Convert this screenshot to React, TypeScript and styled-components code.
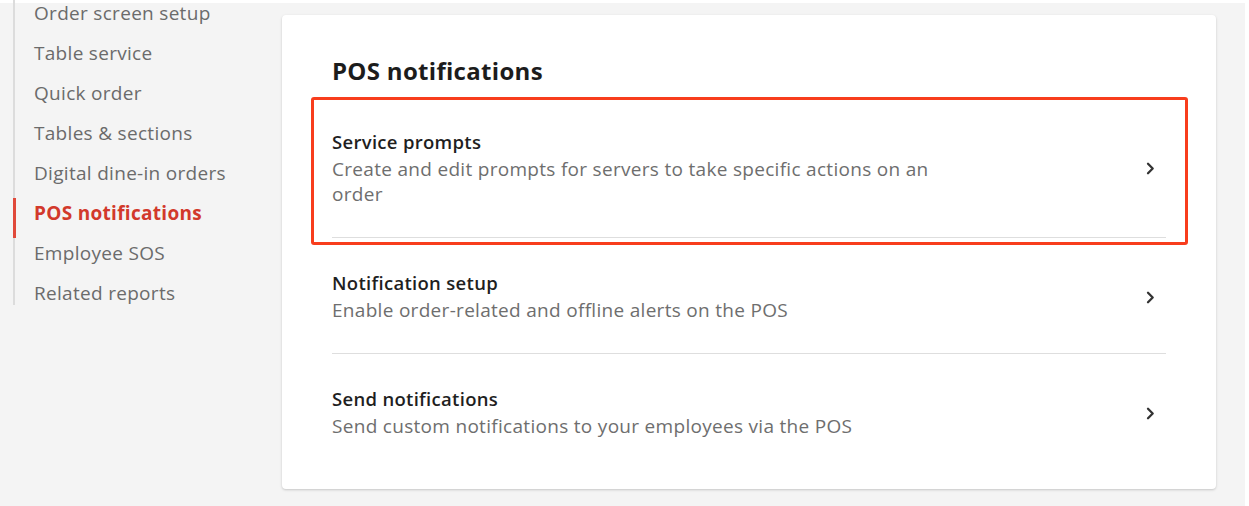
import React from "react";
import styled, { createGlobalStyle } from "styled-components";

const GlobalStyle = createGlobalStyle`
  html, body {
    margin: 0;
    padding: 0;
    background: #ffffff;
  }
  body {
    font-family: "Open Sans", "Liberation Sans", sans-serif;
    -webkit-font-smoothing: antialiased;
  }
`;

const Page = styled.div`
  display: flex;
  align-items: flex-start;
  margin: 3px 4px 0 0;
  height: 503px;
  background: #f4f4f4;
`;

const Sidebar = styled.nav`
  width: 267px;
  flex-shrink: 0;
  margin: -3px 0 0 13px;
  border-left: 2px solid #dcdcdc;
`;

const NavItem = styled.div<{ $active?: boolean }>`
  margin-left: -2px;
  border-left: 3px solid ${(p) => (p.$active ? "#e0493a" : "transparent")};
  padding: 3px 0 13px 18px;
  font-size: 19px;
  line-height: 24px;
  letter-spacing: 0.3px;
  font-weight: ${(p) => (p.$active ? 700 : 400)};
  color: ${(p) => (p.$active ? "#d2392b" : "#6b6b6b")};
  white-space: nowrap;

  &:first-child {
    padding-top: 1px;
  }

  &:last-child {
    padding-bottom: 0;
  }
`;

const Main = styled.main`
  flex: 1;
  padding: 12px 29px 0 0;
`;

const Card = styled.section`
  background: #ffffff;
  border-radius: 4px;
  box-shadow: 0 1px 3px rgba(0, 0, 0, 0.14), 0 1px 2px rgba(0, 0, 0, 0.06);
  padding: 41px 50px 20px;
`;

const Heading = styled.h2`
  margin: 0 0 11px;
  font-size: 24px;
  line-height: 30px;
  letter-spacing: 0.3px;
  font-weight: 700;
  color: #1c1c1c;
`;

const Row = styled.div<{ $last?: boolean }>`
  position: relative;
  display: flex;
  align-items: center;
  justify-content: space-between;
  padding: 33px 0 30px;
  border-bottom: ${(p) => (p.$last ? "none" : "1px solid #dedede")};
`;

const Highlight = styled.span`
  position: absolute;
  top: 0;
  left: -21px;
  right: -22px;
  bottom: -8px;
  border: 3px solid #f83d1d;
  border-radius: 3px;
  pointer-events: none;
`;

const RowText = styled.div`
  max-width: 610px;
`;

const RowTitle = styled.div`
  font-size: 18.5px;
  line-height: 24px;
  letter-spacing: 0.3px;
  font-weight: 600;
  color: #1f1f1f;
`;

const RowDesc = styled.div`
  margin-top: 3px;
  font-size: 19px;
  line-height: 25px;
  letter-spacing: 0.3px;
  color: #6e6e6e;
`;

const Chevron = styled.svg`
  flex-shrink: 0;
  margin-right: 11px;
`;

const navItems = [
  "Order screen setup",
  "Table service",
  "Quick order",
  "Tables & sections",
  "Digital dine-in orders",
  "POS notifications",
  "Employee SOS",
  "Related reports",
];

const rows = [
  {
    title: "Service prompts",
    desc: "Create and edit prompts for servers to take specific actions on an order",
    highlighted: true,
  },
  {
    title: "Notification setup",
    desc: "Enable order-related and offline alerts on the POS",
  },
  {
    title: "Send notifications",
    desc: "Send custom notifications to your employees via the POS",
  },
];

export default function App() {
  return (
    <>
      <GlobalStyle />
      <Page>
        <Sidebar>
          {navItems.map((item) => (
            <NavItem key={item} $active={item === "POS notifications"}>
              {item}
            </NavItem>
          ))}
        </Sidebar>
        <Main>
          <Card>
            <Heading>POS notifications</Heading>
            {rows.map((row, i) => (
              <Row key={row.title} $last={i === rows.length - 1}>
                {row.highlighted && <Highlight />}
                <RowText>
                  <RowTitle>{row.title}</RowTitle>
                  <RowDesc>{row.desc}</RowDesc>
                </RowText>
                <Chevron width="9" height="13" viewBox="0 0 9 13" fill="none">
                  <path
                    d="M2 1.8 L6.7 6.5 L2 11.2"
                    stroke="#333333"
                    strokeWidth="2.3"
                    strokeLinecap="round"
                    strokeLinejoin="round"
                  />
                </Chevron>
              </Row>
            ))}
          </Card>
        </Main>
      </Page>
    </>
  );
}
